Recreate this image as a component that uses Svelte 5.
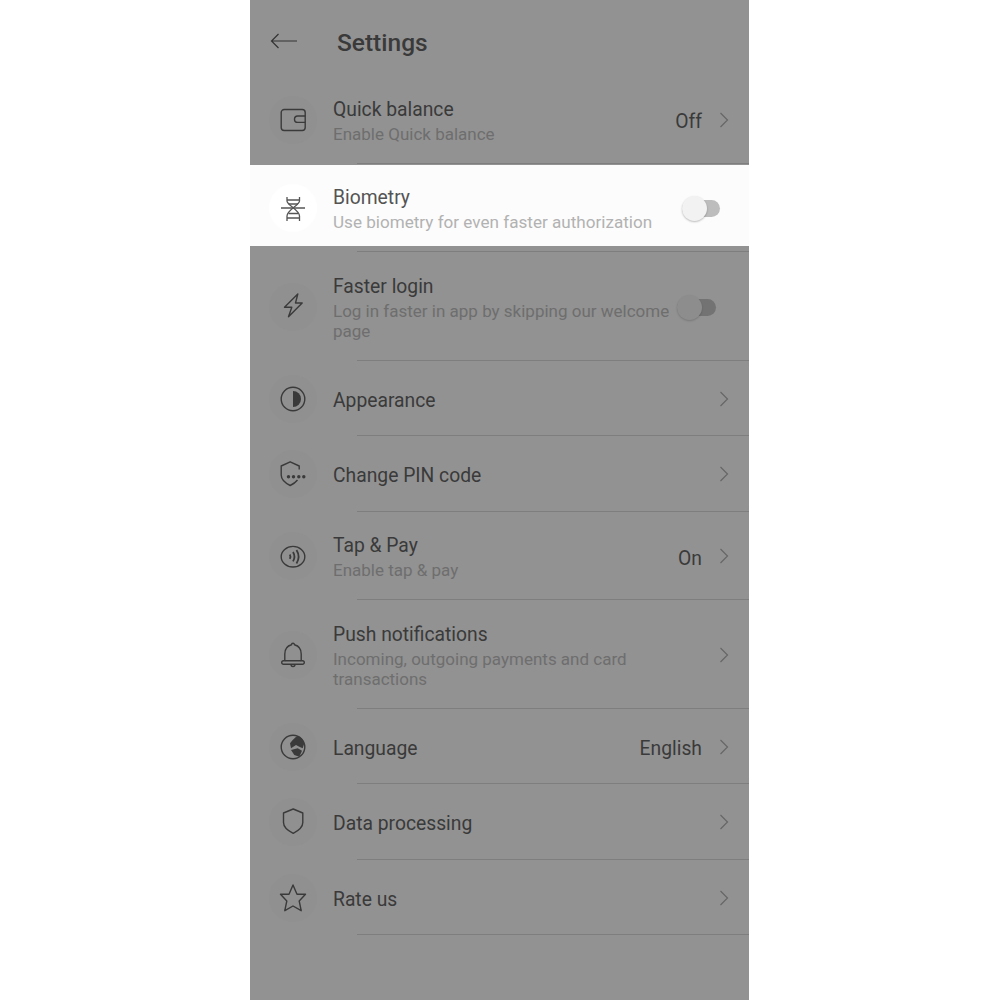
<script>
  const rows = [
    { id: 'wallet', title: 'Quick balance', sub: ['Enable Quick balance'], value: 'Off', h: 89, chev: true },
    { id: 'dna', title: 'Biometry', sub: ['Use biometry for even faster authorization'], h: 88, toggle: true, hi: true },
    { id: 'bolt', title: 'Faster login', sub: ['Log in faster in app by skipping our welcome', 'page'], h: 109, toggle: true, shifted: true },
    { id: 'half', title: 'Appearance', h: 75, chev: true },
    { id: 'pin', title: 'Change PIN code', h: 76, chev: true },
    { id: 'nfc', title: 'Tap & Pay', sub: ['Enable tap & pay'], value: 'On', h: 88, chev: true },
    { id: 'bell', title: 'Push notifications', sub: ['Incoming, outgoing payments and card', 'transactions'], h: 109, chev: true },
    { id: 'globe', title: 'Language', value: 'English', h: 75, chev: true },
    { id: 'shield', title: 'Data processing', h: 76, chev: true },
    { id: 'star', title: 'Rate us', h: 75, chev: true }
  ];
</script>

<main class="phone">
  <header class="head">
    <svg class="back" width="28" height="16" viewBox="0 0 28 16" aria-hidden="true">
      <path d="M27 8H1.500M8.500 1 1.500 8l7 7" />
    </svg>
    <h1>Settings</h1>
  </header>

  {#each rows as r}
    <section class="row" class:hi={r.hi} style="height:{r.h}px">
      {#if r.hi}<div class="glow"></div>{/if}
      <div class="circle">
        <svg width="28" height="28" viewBox="0 0 28 28" aria-hidden="true">
          {#if r.id === 'wallet'}
            <path d="M5.200 3.500h18a3 3 0 0 1 3 3v15a3 3 0 0 1-3 3h-18a3 3 0 0 1-3-3v-15a3 3 0 0 1 3-3z" />
            <path d="M26.200 10h-7.500a3.200 3.200 0 0 0 0 6.400h7.500" />
          {:else if r.id === 'dna'}
            <path d="M2 14h24M8 6h12.500M9.500 10h9.500M9.500 19.500h9.500M8 24h12.500" />
            <path d="M8 3v4c0 4 12.500 9 12.500 15v5M20.500 3v4C20.500 11 8 16 8 22v5" />
          {:else if r.id === 'bolt'}
            <path d="M18.800 1 5.500 14.300h7.300L9.500 23.700 23.200 10h-6.700z" />
          {:else if r.id === 'half'}
            <circle cx="14" cy="14" r="11.800" />
            <path class="fill" d="M14 6a8 8 0 0 1 0 16z" />
          {:else if r.id === 'pin'}
            <path d="M20.200 9.500V6L11.200 1.800 2.200 6v9c0 4.500 4 8 9 10.500 2.800-1.300 5.300-3 7.300-5.500" />
            <circle class="fill" cx="9.500" cy="16.800" r="1.700" /><circle class="fill" cx="14.500" cy="16.800" r="1.700" />
            <circle class="fill" cx="19.800" cy="16.800" r="1.700" /><circle class="fill" cx="24.800" cy="16.800" r="1.700" />
          {:else if r.id === 'nfc'}
            <ellipse cx="14" cy="14.700" rx="11.800" ry="10.300" />
            <path class="thick" d="M10.800 12.500c.8 1.400.8 3 0 4.400M14 10c1.700 2.800 1.700 6.600 0 9.400M17.500 8c2.500 4 2.500 9.400 0 13.400" />
          {:else if r.id === 'bell'}
            <path d="M14 2.300a1.500 1.500 0 0 1 1.500 1.500C20 5 22.200 8.500 22.200 13v6.700h1.300a1.800 1.800 0 0 1 0 3.600h-19a1.800 1.800 0 0 1 0-3.600h1.300V13c0-4.500 2.200-8 6.700-9.200A1.500 1.500 0 0 1 14 2.300z" />
            <path d="M12 23.300c0 3 4 3 4 0M6 19.700h16" />
          {:else if r.id === 'globe'}
            <circle cx="14" cy="14" r="11.800" />
            <path class="fill" d="M18.700 3c3.500 1.200 6 4 6.600 7.300l-1.600 5-3.400-1.600-3.300-1.700-5 3.300-1-5 2.700-3.300c1.500-1.500 3-3 5-4z" />
            <path class="fill" d="M12 17l6.700-1.700 4.300 2.400-2.700 6-5-1.700z" />
          {:else if r.id === 'shield'}
            <path d="M14.200 1 23.800 5v9.500c0 4.500-4 8-9.600 10.800C8.500 22.500 4.500 19 4.500 14.500V5z" />
          {:else if r.id === 'star'}
            <path d="M14 1l4 9.300h8.500l-6.300 6.700 2 9.700L14 22l-8.200 4.700 2-9.700L1.500 10.300H10z" />
          {/if}
        </svg>
      </div>

      <div class="text" class:single={!r.sub}>
        <div class="title">{r.title}</div>
        {#if r.sub}
          <div class="sub">{#each r.sub as line}<div>{line}</div>{/each}</div>
        {/if}
      </div>

      {#if r.value}<span class="value">{r.value}</span>{/if}
      {#if r.chev}
        <svg class="chev" width="10" height="16" viewBox="0 0 10 16" aria-hidden="true"><path d="M1.500 1 8.500 8l-7 7" /></svg>
      {/if}
      {#if r.toggle}
        <div class="toggle" class:shifted={r.shifted}><span class="thumb"></span></div>
      {/if}
    </section>
  {/each}
</main>

<style>
  :global(body) {
    margin: 0;
    background: #fff;
  }
  .phone {
    width: 499px;
    height: 1000px;
    margin-left: 250px;
    background: #929292;
    font-family: Roboto, sans-serif;
    overflow: hidden;
  }
  .head {
    height: 75px;
    display: flex;
    align-items: center;
    padding: 9px 0 0 20px;
    box-sizing: border-box;
  }
  .back {
    fill: none;
    stroke: #333;
    stroke-width: 1.200;
    margin-right: 39px;
    margin-top: -3px;
  }
  h1 {
    margin: 0;
    font-size: 24.500px;
    font-weight: 500;
    color: #3a3a3a;
  }
  .row {
    position: relative;
    display: flex;
    align-items: center;
    padding: 0 20px 0 19px;
    box-sizing: border-box;
  }
  .row::after {
    content: '';
    position: absolute;
    left: 107px;
    right: 0;
    bottom: 0;
    height: 1.500px;
    background: #7e7e7e;
  }
  .glow {
    position: absolute;
    left: 0;
    right: 0;
    top: 1px;
    height: 81px;
    background: #fcfcfc;
  }
  .circle {
    position: relative;
    width: 48px;
    height: 48px;
    border-radius: 50%;
    background: #909090;
    display: flex;
    align-items: center;
    justify-content: center;
    flex: none;
    margin-right: 16px;
  }
  .hi .circle {
    background: #fff;
  }
  .circle svg {
    fill: none;
    stroke: #3a3a3a;
    stroke-width: 1.400;
    stroke-linejoin: round;
  }
  .circle svg .fill {
    fill: #3a3a3a;
    stroke: none;
  }
  .circle svg .thick {
    stroke-width: 1.800;
  }
  .hi .circle svg {
    stroke: #555;
    stroke-width: 1.300;
  }
  .text {
    position: relative;
    flex: 1;
    min-width: 0;
    padding-top: 2px;
  }
  .text.single {
    padding-top: 4px;
  }
  .title {
    font-size: 19.300px;
    line-height: 24px;
    color: #3a3a3a;
  }
  .sub {
    font-size: 17px;
    line-height: 20px;
    color: #6e6e6e;
    margin-top: 2px;
  }
  .hi .title {
    color: #545454;
  }
  .hi .sub {
    font-size: 17.100px;
    color: #b2b2b2;
  }
  .value {
    font-size: 19.300px;
    color: #3a3a3a;
    margin-right: 17px;
    margin-top: 4px;
  }
  .chev {
    fill: none;
    stroke: #666;
    stroke-width: 1.200;
    flex: none;
  }
  .toggle {
    position: absolute;
    left: 432px;
    top: 36px;
    width: 38px;
    height: 17px;
    border-radius: 9px;
    background: #bdbdbd;
  }
  .thumb {
    position: absolute;
    left: 0;
    top: -4px;
    width: 25px;
    height: 25px;
    border-radius: 50%;
    background: #f2f2f2;
    box-shadow: 0 1px 2px rgba(0, 0, 0, .25);
  }
  .toggle.shifted {
    left: 427px;
    top: 47px;
    width: 39px;
    background: #737373;
  }
  .shifted .thumb {
    background: #8d8d8d;
    box-shadow: 0 1px 2px rgba(0, 0, 0, .18);
  }
</style>
